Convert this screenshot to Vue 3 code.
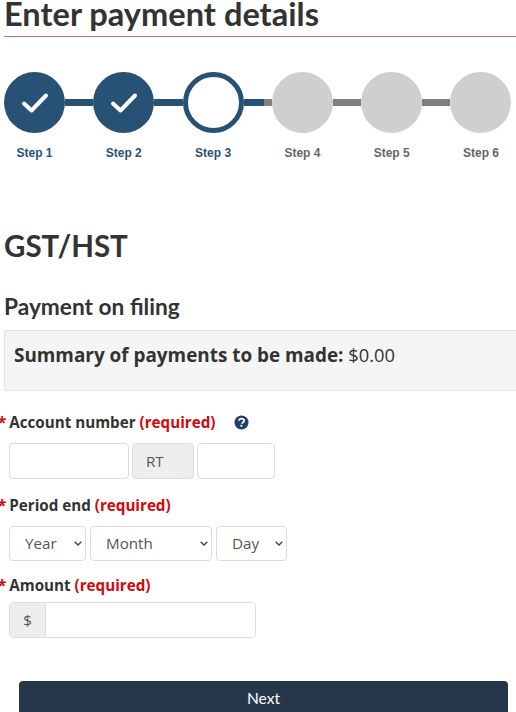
<template>
  <main class="page">
    <h1 class="title">Enter payment details</h1>

    <!-- Шаги -->
    <ol class="stepper">
      <template v-for="(step, i) in steps" :key="step.label">
        <li class="step" :class="step.state">
          <span class="circle">
            <svg v-if="step.state === 'done'" class="check" viewBox="0 0 28 22" aria-hidden="true">
              <path d="M3 11.5 10.5 18.5 25 3.5" />
            </svg>
          </span>
          <span class="step-label">{{ step.label }}</span>
        </li>
        <li v-if="i < steps.length - 1" class="bar" :class="barClass(i)" aria-hidden="true"></li>
      </template>
    </ol>

    <h2 class="tax-name">GST/HST</h2>
    <h3 class="section-name">Payment on filing</h3>

    <div class="summary">
      <strong>Summary of payments to be made:</strong> $0.00
    </div>

    <form class="form" @submit.prevent>
      <div class="field">
        <label class="field-label">
          <span class="star">*</span> Account number <span class="req">(required)</span>
          <svg class="help" viewBox="0 0 16 16" aria-hidden="true">
            <circle cx="8" cy="8" r="7.5" fill="#1f3f66" />
            <path d="M5.4 6.2C5.5 4.7 6.6 3.9 8.1 3.9c1.5 0 2.6.9 2.6 2.1 0 1-.6 1.5-1.3 2-.6.4-.9.7-.9 1.4" fill="none" stroke="#fff" stroke-width="1.9" />
            <rect x="6.9" y="10.5" width="2" height="2" fill="#fff" />
          </svg>
        </label>
        <div class="row account-row">
          <input class="input account-main" type="text" />
          <span class="rt">RT</span>
          <input class="input account-end" type="text" />
        </div>
      </div>

      <div class="field period">
        <label class="field-label"><span class="star">*</span> Period end <span class="req">(required)</span></label>
        <div class="row">
          <span v-for="part in dateParts" :key="part.label" class="select-wrap" :class="part.cls">
            <select class="select"><option>{{ part.label }}</option></select>
            <svg class="chevron" viewBox="0 0 8 5" aria-hidden="true">
              <path d="M.7.7 4 4 7.3.7" />
            </svg>
          </span>
        </div>
      </div>

      <div class="field amount">
        <label class="field-label"><span class="star">*</span> Amount <span class="req">(required)</span></label>
        <div class="amount-group">
          <span class="addon">$</span>
          <input class="amount-input" type="text" />
        </div>
      </div>

      <button class="next" type="submit">Next</button>
    </form>
  </main>
</template>

<script setup>
const steps = [
  { label: 'Step 1', state: 'done' },
  { label: 'Step 2', state: 'done' },
  { label: 'Step 3', state: 'current' },
  { label: 'Step 4', state: 'todo' },
  { label: 'Step 5', state: 'todo' },
  { label: 'Step 6', state: 'todo' }
];

const dateParts = [
  { label: 'Year', cls: 'year' },
  { label: 'Month', cls: 'month' },
  { label: 'Day', cls: 'day' }
];

function barClass(i) {
  if (i < 2) return 'bar-done';
  if (i === 2) return 'bar-half';
  return 'bar-todo';
}
</script>

<style>
html,
body {
  margin: 0;
  background: #fff;
  overflow: hidden;
}
</style>

<style scoped>
.page {
  width: 516px;
  height: 712px;
  overflow: hidden;
  font-family: "Open Sans", "Liberation Sans", sans-serif;
  color: #333;
}

.title {
  margin: -6px 0 0 4px;
  padding-bottom: 3px;
  border-bottom: 1px solid #d9666b;
  font-family: Lato, "Liberation Sans", sans-serif;
  font-size: 32.6px;
  line-height: 39px;
  font-weight: 700;
  color: #333;
}

.stepper {
  display: flex;
  align-items: flex-start;
  list-style: none;
  margin: 35px 0 0 4px;
  padding: 0;
}

.step {
  width: 61px;
  flex: none;
  display: flex;
  flex-direction: column;
  align-items: center;
}

.circle {
  box-sizing: border-box;
  width: 61px;
  height: 61px;
  border-radius: 50%;
  display: flex;
  align-items: center;
  justify-content: center;
}

.done .circle {
  background: #285176;
}

.current .circle {
  border: 5px solid #285176;
  background: #fff;
}

.todo .circle {
  background: #cfcfcf;
}

.check {
  width: 28px;
  height: 22px;
}

.check path {
  fill: none;
  stroke: #fff;
  stroke-width: 4;
  stroke-linecap: round;
  stroke-linejoin: round;
}

.step-label {
  margin-top: 12px;
  font-family: "Liberation Sans", Arial, sans-serif;
  font-size: 12px;
  line-height: 16px;
  font-weight: 700;
  color: #285176;
}

.todo .step-label {
  color: #666;
}

.bar {
  width: 28.3px;
  height: 7px;
  flex: none;
  margin-top: 27px;
}

.bar-done {
  background: #285176;
}

.bar-todo {
  background: #808080;
}

.bar-half {
  background: linear-gradient(to right, #285176 0, #285176 20px, #808080 20px);
}

.tax-name {
  margin: 66px 0 0 4px;
  font-family: Lato, "Liberation Sans", sans-serif;
  font-size: 29.5px;
  line-height: 38px;
  font-weight: 700;
  color: #333;
}

.section-name {
  margin: 28px 0 0 4px;
  font-family: Lato, "Liberation Sans", sans-serif;
  font-size: 22.7px;
  line-height: 27px;
  font-weight: 700;
  color: #333;
}

.summary {
  box-sizing: border-box;
  height: 61px;
  margin: 10px 0 0 4px;
  padding: 12px 9px;
  border: 1px solid #e3e3e3;
  border-right: 0;
  border-radius: 2px 0 0 2px;
  background: #f5f5f5;
  font-size: 18.3px;
  line-height: 24px;
}

.summary strong {
  font-size: 18.9px;
}

.form {
  margin-top: 21px;
}

.field-label {
  display: flex;
  align-items: center;
  white-space: pre-wrap;
  font-size: 15.2px;
  line-height: 20px;
  font-weight: 700;
  color: #333;
}

.star,
.req {
  color: #d3080c;
}

.star {
  margin-left: -2px;
  margin-right: -1px;
}

.help {
  width: 15px;
  height: 15px;
  margin-left: 19px;
}

.row {
  display: flex;
  gap: 3px;
  margin: 11px 0 0 9px;
}

.input {
  box-sizing: border-box;
  height: 36px;
  border: 1px solid #ddd;
  border-radius: 4px;
  background: #fff;
  outline: none;
}

.account-main {
  width: 120px;
}

.account-end {
  width: 78px;
}

.rt {
  box-sizing: border-box;
  width: 62px;
  height: 36px;
  padding-left: 13px;
  border: 1px solid #ddd;
  border-radius: 4px;
  background: #eee;
  font-size: 15.2px;
  line-height: 34px;
  color: #555;
}

.period {
  margin-top: 16px;
}

.period .row {
  gap: 4px;
}

.select-wrap {
  position: relative;
  display: block;
  height: 35px;
}

.select {
  display: block;
  box-sizing: border-box;
  width: 100%;
  height: 35px;
  padding: 0 0 2px 15px;
  border: 1px solid #ddd;
  border-radius: 4px;
  background: #fff;
  appearance: none;
  font-family: inherit;
  font-size: 15.2px;
  color: #555;
  outline: none;
}

.chevron {
  position: absolute;
  top: 15px;
  right: 4px;
  width: 8px;
  height: 5px;
  pointer-events: none;
}

.chevron path {
  fill: none;
  stroke: #444;
  stroke-width: 1.4;
}

.year {
  width: 77px;
}

.month {
  width: 122px;
}

.day {
  width: 71px;
}

.amount {
  margin-top: 14px;
}

.amount-group {
  display: flex;
  box-sizing: border-box;
  width: 247px;
  height: 36px;
  margin: 7px 0 0 9px;
  border: 1px solid #ddd;
  border-radius: 4px;
  overflow: hidden;
}

.addon {
  box-sizing: border-box;
  width: 36px;
  border-right: 1px solid #ddd;
  background: #eee;
  text-align: center;
  font-size: 15.2px;
  line-height: 34px;
  color: #555;
}

.amount-input {
  flex: 1;
  min-width: 0;
  border: 0;
  outline: none;
}

.next {
  display: block;
  width: 489px;
  height: 34px;
  margin: 43px 0 0 19px;
  border: 0;
  border-radius: 4px;
  background: #26374a;
  font-family: Lato, "Liberation Sans", sans-serif;
  font-size: 15.5px;
  color: #fff;
}
</style>
